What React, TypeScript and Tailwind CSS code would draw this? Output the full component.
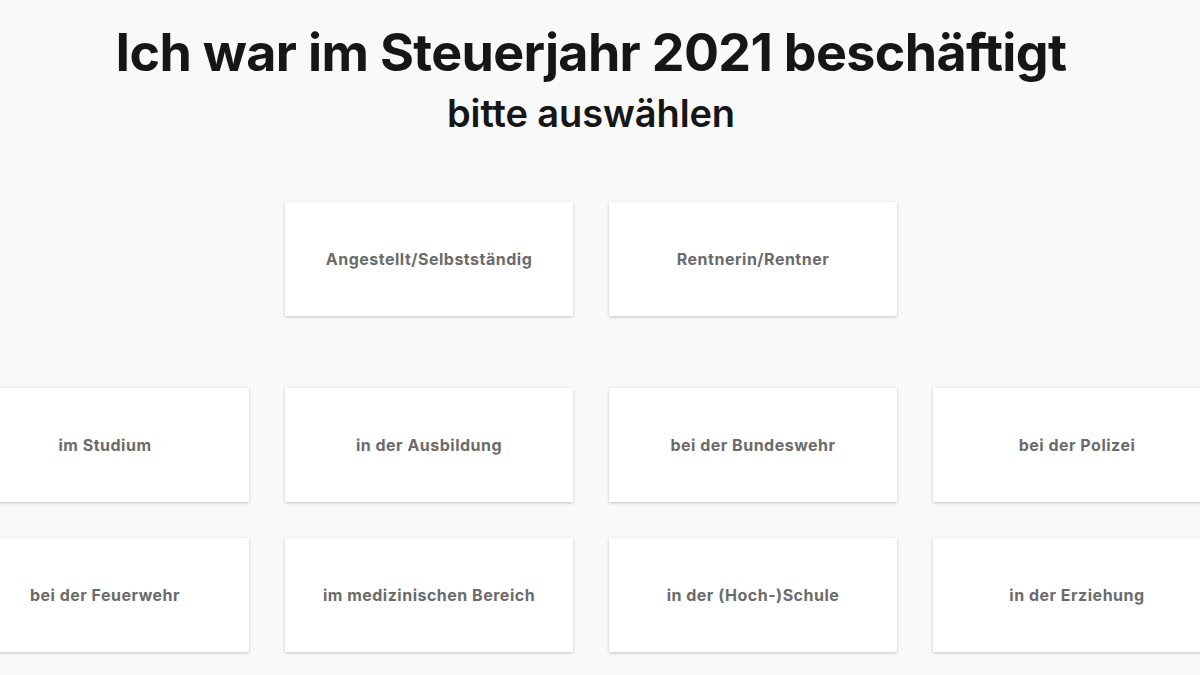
import React from 'react';

const topOptions = ['Angestellt/Selbstständig', 'Rentnerin/Rentner'];

const moreOptions = [
  'im Studium',
  'in der Ausbildung',
  'bei der Bundeswehr',
  'bei der Polizei',
  'bei der Feuerwehr',
  'im medizinischen Bereich',
  'in der (Hoch-)Schule',
  'in der Erziehung',
];

const OptionCard: React.FC<{ label: string }> = ({ label }) => (
  <button
    type="button"
    className="flex h-[114px] w-[288px] items-center justify-center bg-white text-[16px] font-bold tracking-[0.5px] text-[#6b6b6b] shadow-[0_1px_3px_rgba(0,0,0,0.22)]"
  >
    {label}
  </button>
);

export default function App() {
  return (
    <div className="min-h-screen overflow-hidden bg-[#f9f9f9] font-['Inter',sans-serif]">
      <div className="flex w-[1182px] flex-col items-center pt-[27px]">
        <h1 className="text-[52px] font-bold leading-[52px] tracking-[-0.65px] text-[#161616]">
          Ich war im Steuerjahr 2021 beschäftigt
        </h1>
        <p className="mt-[11px] text-[38px] font-semibold leading-[46px] tracking-[-0.1px] text-[#161616]">
          bitte auswählen
        </p>

        <div className="mt-[66px] flex gap-[36px]">
          {topOptions.map((o) => (
            <OptionCard key={o} label={o} />
          ))}
        </div>

        <div className="mt-[72px] grid w-[1260px] shrink-0 grid-cols-4 gap-[36px]">
          {moreOptions.map((o) => (
            <OptionCard key={o} label={o} />
          ))}
        </div>
      </div>
    </div>
  );
}
